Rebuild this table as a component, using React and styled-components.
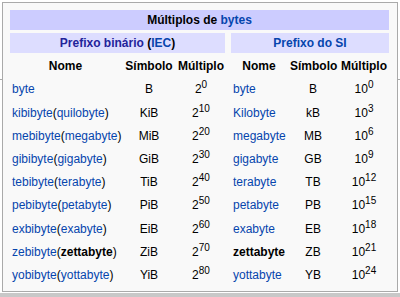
import React from "react";
import styled, { createGlobalStyle } from "styled-components";

const Global = createGlobalStyle`
  html {
    background: linear-gradient(
      to bottom,
      #fff 0, #fff 79px,
      #aaa 79px, #aaa 80px,
      #fff 80px, #fff 293px,
      #c8c8c8 293px, #c8c8c8 100%
    );
    min-height: 297px;
  }
  body {
    margin: 0;
    font-family: "Liberation Sans", Arial, Helvetica, sans-serif;
    font-size: 12px;
    color: #000;
  }
`;

const Box = styled.div`
  margin: 2px;
  border: 1px solid #aaa;
  background: #f9f9f9;
  padding: 7px 8px 6px 7px;
`;

const Grid = styled.div`
  display: grid;
  grid-template-columns: 111px 50px 48px 0 56px 46px 50px;
  grid-template-rows: 20px 20px 20.4px repeat(9, 20.2px);
  gap: 3px;
`;

const Title = styled.div`
  grid-column: 1 / -1;
  background: #ccf;
  font-weight: bold;
  line-height: 20px;
  text-align: center;
`;

const Sub = styled.div`
  grid-column: ${(p) => p.$span};
  background: #ddf;
  font-weight: bold;
  line-height: 20px;
  text-align: center;
`;

const Head = styled.div`
  font-weight: bold;
  line-height: 20.4px;
  text-align: center;
  white-space: nowrap;
`;

const Cell = styled.div`
  line-height: 20.2px;
  text-align: ${(p) => (p.$left ? "left" : "center")};
  padding-left: ${(p) => (p.$left ? "2px" : "0")};
  white-space: nowrap;
`;

const Spacer = styled.div``;

const Link = styled.span`
  color: ${(p) => (p.$visited ? "#23239a" : "#0645ad")};
`;

const Strong = styled.b`
  font-weight: bold;
  color: #000;
`;

const Sup = styled.sup`
  font-size: 10px;
  line-height: 0;
  vertical-align: 5px;
`;

const rows = [
  ["byte", null, "B", "0", "byte", "B", "0"],
  ["kibibyte", "quilobyte", "KiB", "10", "Kilobyte", "kB", "3"],
  ["mebibyte", "megabyte", "MiB", "20", "megabyte", "MB", "6"],
  ["gibibyte", "gigabyte", "GiB", "30", "gigabyte", "GB", "9"],
  ["tebibyte", "terabyte", "TiB", "40", "terabyte", "TB", "12"],
  ["pebibyte", "petabyte", "PiB", "50", "petabyte", "PB", "15"],
  ["exbibyte", "exabyte", "EiB", "60", "exabyte", "EB", "18"],
  ["zebibyte", "zettabyte", "ZiB", "70", "zettabyte", "ZB", "21", true],
  ["yobibyte", "yottabyte", "YiB", "80", "yottabyte", "YB", "24"],
];

export default function App() {
  return (
    <>
      <Global />
      <Box>
        <Grid>
          <Title>
            Múltiplos de <Link>bytes</Link>
          </Title>
          <Sub $span="1 / 4">
            <Link $visited>Prefixo binário</Link> (<Link>IEC</Link>)
          </Sub>
          <Spacer />
          <Sub $span="5 / 8">
            <Link>Prefixo do SI</Link>
          </Sub>

          <Head>Nome</Head>
          <Head>Símbolo</Head>
          <Head>Múltiplo</Head>
          <Spacer />
          <Head>Nome</Head>
          <Head>Símbolo</Head>
          <Head>Múltiplo</Head>

          {rows.map(([iec, si, sym, exp, siName, siSym, siExp, bold]) => (
            <React.Fragment key={iec}>
              <Cell $left>
                <Link>{iec}</Link>
                {si && (
                  <>
                    ({bold ? <Strong>{si}</Strong> : <Link>{si}</Link>})
                  </>
                )}
              </Cell>
              <Cell>{sym}</Cell>
              <Cell>
                2<Sup>{exp}</Sup>
              </Cell>
              <Spacer />
              <Cell $left>
                {bold ? <Strong>{siName}</Strong> : <Link>{siName}</Link>}
              </Cell>
              <Cell>{siSym}</Cell>
              <Cell>
                10<Sup>{siExp}</Sup>
              </Cell>
            </React.Fragment>
          ))}
        </Grid>
      </Box>
    </>
  );
}
